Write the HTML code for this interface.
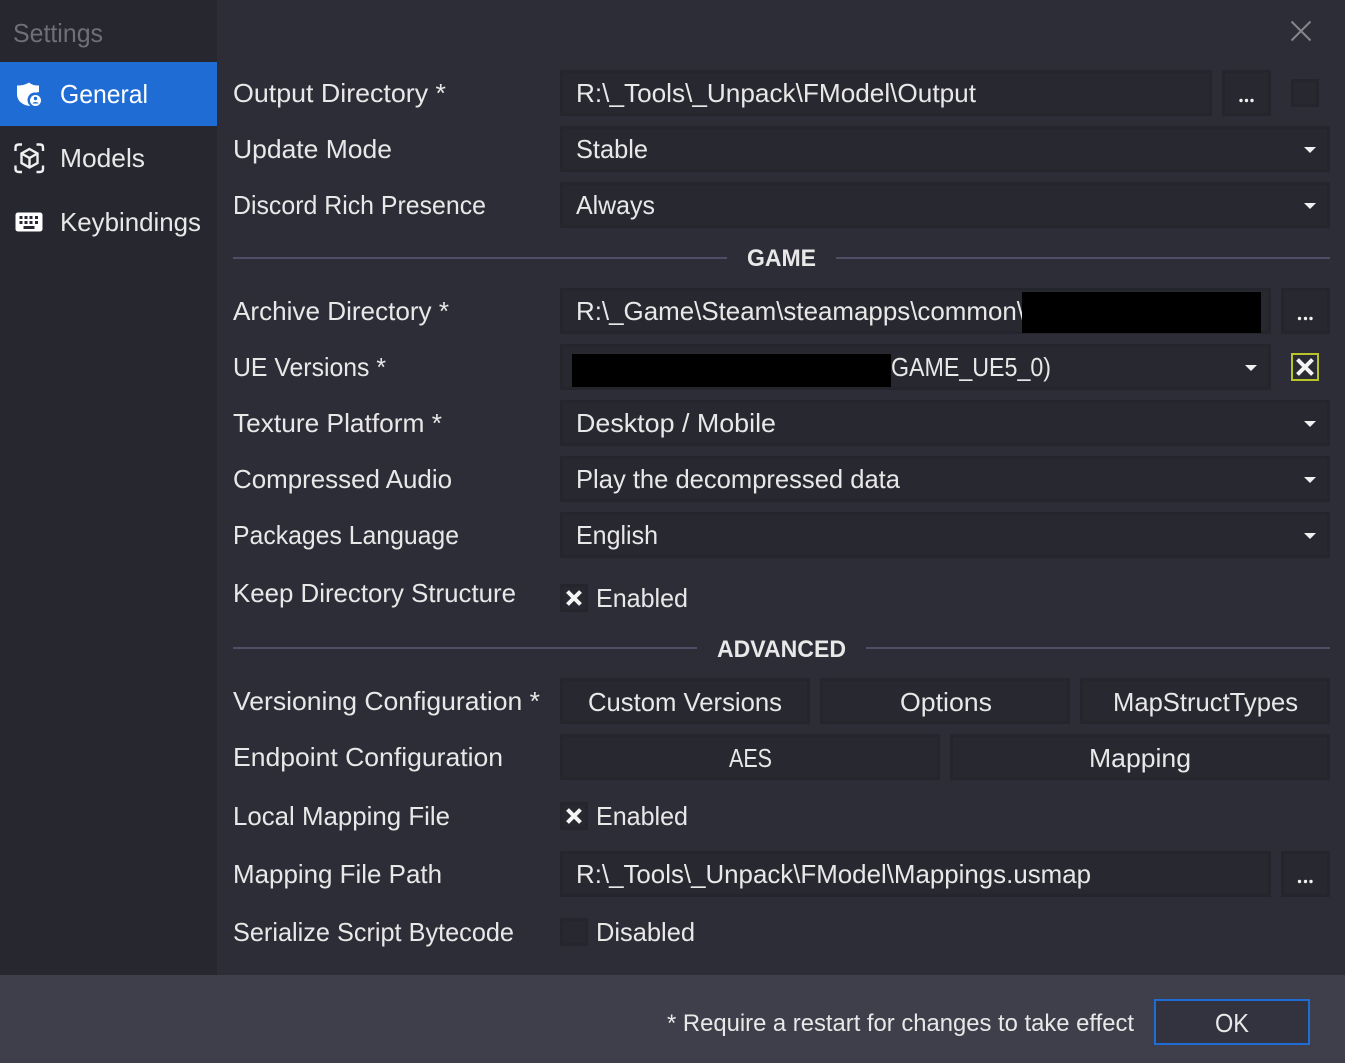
<!DOCTYPE html>
<html lang="en">
<head>
<meta charset="utf-8">
<title>Settings</title>
<style>
html,body{margin:0;padding:0;background:#2d2d37;width:1345px;height:1063px;overflow:hidden}
svg{display:block}
text{font-family:"Liberation Sans",sans-serif;font-size:26px;fill:#e8e8e8}
.b{fill:#282830;stroke:#25252d;stroke-width:3}
.h{font-weight:bold;font-size:24px;fill:#e8e8e8}
</style>
</head>
<body>
<svg width="1345" height="1063" viewBox="0 0 1345 1063" xmlns="http://www.w3.org/2000/svg">
<rect width="1345" height="1063" fill="#2d2d37"/>
<rect width="217" height="975" fill="#27272f"/>
<rect y="62" width="217" height="64" fill="#1f6cd5"/>
<rect y="975" width="1345" height="88" fill="#3f3f4b"/>

<text x="13" y="42" textLength="90" lengthAdjust="spacingAndGlyphs" style="fill:#6f6f76">Settings</text>
<path d="M1291.5 21.500L1310.500 40.500M1310.500 21.500L1291.500 40.500" stroke="#85858a" stroke-width="2" fill="none"/>

<!-- sidebar icons -->
<path d="M29 82.500C25 85 21.500 85.500 17 85.500L17 94C17 100 21 104 27 105.500L30 105.500L30 84Z" fill="#fff"/>
<path d="M29 82.500C32 85 35 85.500 39 85.500L39 92L30 94L30 106L27 105.500Z" fill="#fff"/>
<circle cx="35" cy="100" r="7.500" fill="#1f6cd5"/>
<circle cx="35.500" cy="100.500" r="5.500" fill="#fff"/>
<circle cx="35.500" cy="98.500" r="1.700" fill="#1f6cd5"/>
<path d="M32.500 103.500C33 101.500 38 101.500 38.500 103.500Z" fill="#1f6cd5"/>

<g fill="none" stroke="#f0f0f0" stroke-width="2.400">
<path d="M15.500 151V147.500Q15.500 144.500 19 144.500H22"/>
<path d="M36.500 144.500H40Q43 144.500 43 147.500V151"/>
<path d="M15.500 165.500V169Q15.500 172 19 172H22"/>
<path d="M36.500 172H40Q43 172 43 169V165.500"/>
<path d="M29.500 149L37.500 153.500V163L29.500 167.500L21.500 163V153.500Z"/>
<path d="M21.500 153.500L29.500 158L37.500 153.500M29.500 158V167.500"/>
</g>

<rect x="15.500" y="212.500" width="27" height="19" rx="2.500" fill="#fff"/>
<g fill="#27272f">
<rect x="19.500" y="216" width="3" height="3"/><rect x="24.500" y="216" width="3" height="3"/><rect x="29.500" y="216" width="3" height="3"/><rect x="35" y="216" width="3" height="3"/>
<rect x="19.500" y="221" width="3" height="3"/><rect x="24.500" y="221" width="3" height="3"/><rect x="29.500" y="221" width="3" height="3"/><rect x="35" y="221" width="3" height="3"/>
<rect x="23.500" y="226" width="11" height="3"/>
</g>

<text x="60" y="103" textLength="88" lengthAdjust="spacingAndGlyphs" style="fill:#fff">General</text>
<text x="60" y="167" textLength="85" lengthAdjust="spacingAndGlyphs">Models</text>
<text x="60" y="231" textLength="141" lengthAdjust="spacingAndGlyphs">Keybindings</text>

<!-- labels -->
<text x="233" y="102" textLength="213" lengthAdjust="spacingAndGlyphs">Output Directory *</text>
<text x="233" y="158" textLength="159" lengthAdjust="spacingAndGlyphs">Update Mode</text>
<text x="233" y="214" textLength="253" lengthAdjust="spacingAndGlyphs">Discord Rich Presence</text>
<text x="233" y="320" textLength="216" lengthAdjust="spacingAndGlyphs">Archive Directory *</text>
<text x="233" y="376" textLength="153" lengthAdjust="spacingAndGlyphs">UE Versions *</text>
<text x="233" y="432" textLength="209" lengthAdjust="spacingAndGlyphs">Texture Platform *</text>
<text x="233" y="488" textLength="219" lengthAdjust="spacingAndGlyphs">Compressed Audio</text>
<text x="233" y="544" textLength="226" lengthAdjust="spacingAndGlyphs">Packages Language</text>
<text x="233" y="602" textLength="283" lengthAdjust="spacingAndGlyphs">Keep Directory Structure</text>
<text x="233" y="710" textLength="307" lengthAdjust="spacingAndGlyphs">Versioning Configuration *</text>
<text x="233" y="766" textLength="270" lengthAdjust="spacingAndGlyphs">Endpoint Configuration</text>
<text x="233" y="825" textLength="217" lengthAdjust="spacingAndGlyphs">Local Mapping File</text>
<text x="233" y="883" textLength="209" lengthAdjust="spacingAndGlyphs">Mapping File Path</text>
<text x="233" y="941" textLength="281" lengthAdjust="spacingAndGlyphs">Serialize Script Bytecode</text>

<!-- boxes -->
<rect class="b" x="561.500" y="71.500" width="649" height="43"/>
<rect class="b" x="1223.500" y="71.500" width="46" height="43"/>
<rect class="b" x="1292.500" y="80.500" width="25" height="25"/>
<rect class="b" x="561.500" y="127.500" width="767" height="43"/>
<rect class="b" x="561.500" y="183.500" width="767" height="43"/>
<rect class="b" x="561.500" y="289.500" width="708" height="43"/>
<rect class="b" x="1282.500" y="289.500" width="46" height="43"/>
<rect class="b" x="561.500" y="345.500" width="708" height="43"/>
<rect class="b" x="561.500" y="401.500" width="767" height="43"/>
<rect class="b" x="561.500" y="457.500" width="767" height="43"/>
<rect class="b" x="561.500" y="513.500" width="767" height="43"/>
<rect class="b" x="561.500" y="585.500" width="25" height="25"/>
<rect class="b" x="561.500" y="679.500" width="247" height="43"/>
<rect class="b" x="821.500" y="679.500" width="247" height="43"/>
<rect class="b" x="1081.500" y="679.500" width="247" height="43"/>
<rect class="b" x="561.500" y="735.500" width="377" height="43"/>
<rect class="b" x="951.500" y="735.500" width="377" height="43"/>
<rect class="b" x="561.500" y="803.500" width="25" height="25"/>
<rect class="b" x="561.500" y="852.500" width="708" height="43"/>
<rect class="b" x="1282.500" y="852.500" width="46" height="43"/>
<rect class="b" x="561.500" y="919.500" width="25" height="25"/>

<!-- values -->
<text x="576" y="102" textLength="400" lengthAdjust="spacingAndGlyphs">R:\_Tools\_Unpack\FModel\Output</text>
<text x="576" y="158" textLength="72" lengthAdjust="spacingAndGlyphs">Stable</text>
<text x="576" y="214" textLength="79" lengthAdjust="spacingAndGlyphs">Always</text>
<text x="576" y="320" textLength="448" lengthAdjust="spacingAndGlyphs">R:\_Game\Steam\steamapps\common\</text>
<text x="891" y="376" textLength="160" lengthAdjust="spacingAndGlyphs">GAME_UE5_0)</text>
<text x="576" y="432" textLength="200" lengthAdjust="spacingAndGlyphs">Desktop / Mobile</text>
<text x="576" y="488" textLength="324" lengthAdjust="spacingAndGlyphs">Play the decompressed data</text>
<text x="576" y="544" textLength="82" lengthAdjust="spacingAndGlyphs">English</text>
<text x="596" y="607" textLength="92" lengthAdjust="spacingAndGlyphs">Enabled</text>
<text x="588" y="711" textLength="194" lengthAdjust="spacingAndGlyphs">Custom Versions</text>
<text x="900" y="711" textLength="92" lengthAdjust="spacingAndGlyphs">Options</text>
<text x="1113" y="711" textLength="185" lengthAdjust="spacingAndGlyphs">MapStructTypes</text>
<text x="729" y="767" textLength="43" lengthAdjust="spacingAndGlyphs">AES</text>
<text x="1089" y="767" textLength="102" lengthAdjust="spacingAndGlyphs">Mapping</text>
<text x="596" y="825" textLength="92" lengthAdjust="spacingAndGlyphs">Enabled</text>
<text x="576" y="883" textLength="515" lengthAdjust="spacingAndGlyphs">R:\_Tools\_Unpack\FModel\Mappings.usmap</text>
<text x="596" y="941" textLength="99" lengthAdjust="spacingAndGlyphs">Disabled</text>

<!-- redactions -->
<rect x="1022" y="292" width="239" height="41" fill="#000"/>
<rect x="572" y="354" width="319" height="33" fill="#000"/>

<!-- section headers -->
<rect x="233" y="257" width="494" height="2" fill="#4f4e66"/>
<rect x="836" y="257" width="494" height="2" fill="#4f4e66"/>
<text class="h" x="747" y="266" textLength="69" lengthAdjust="spacingAndGlyphs">GAME</text>
<rect x="233" y="647" width="464" height="2" fill="#4f4e66"/>
<rect x="866" y="647" width="464" height="2" fill="#4f4e66"/>
<text class="h" x="717" y="657" textLength="129" lengthAdjust="spacingAndGlyphs">ADVANCED</text>

<!-- dots -->
<g fill="#f0f0f0">
<circle cx="1241" cy="100.500" r="1.700"/><circle cx="1246.500" cy="100.500" r="1.700"/><circle cx="1252" cy="100.500" r="1.700"/>
<circle cx="1299.500" cy="318.500" r="1.700"/><circle cx="1305.500" cy="318.500" r="1.700"/><circle cx="1311" cy="318.500" r="1.700"/>
<circle cx="1299.500" cy="881.500" r="1.700"/><circle cx="1305.500" cy="881.500" r="1.700"/><circle cx="1311" cy="881.500" r="1.700"/>
</g>

<!-- dropdown arrows -->
<g fill="#f0f0f0">
<path d="M1304 147H1316L1310 153Z"/>
<path d="M1304 203H1316L1310 209Z"/>
<path d="M1245 365H1257L1251 371Z"/>
<path d="M1304 421H1316L1310 427Z"/>
<path d="M1304 477H1316L1310 483Z"/>
<path d="M1304 533H1316L1310 539Z"/>
</g>

<!-- checks -->
<rect x="1292" y="354" width="26" height="26" fill="#2b2b33" stroke="#b9c429" stroke-width="2"/>
<g stroke="#f4f4f4" stroke-width="4" fill="none">
<path d="M1297.500 359.500L1312.500 374.500M1312.500 359.500L1297.500 374.500"/>
<path d="M567.500 591.500L580.500 604.500M580.500 591.500L567.500 604.500"/>
<path d="M567.500 809.500L580.500 822.500M580.500 809.500L567.500 822.500"/>
</g>

<!-- footer -->
<text x="667" y="1031" textLength="467" lengthAdjust="spacingAndGlyphs" style="font-size:24px">* Require a restart for changes to take effect</text>
<rect x="1155" y="1000" width="154" height="44" fill="#33333f" stroke="#1f6cd5" stroke-width="2"/>
<text x="1215" y="1032" textLength="34" lengthAdjust="spacingAndGlyphs">OK</text>
</svg>
</body>
</html>
